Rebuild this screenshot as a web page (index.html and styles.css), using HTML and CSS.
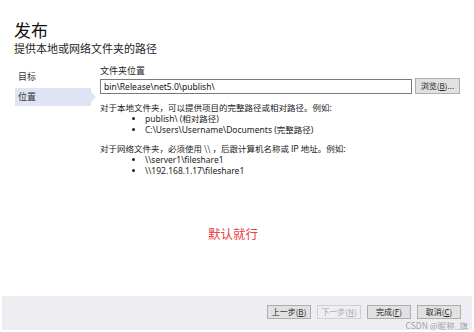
FILE: index.html
```html
<!DOCTYPE html>
<html lang="zh">
<head>
<meta charset="utf-8">
<link rel="stylesheet" href="styles.css">
</head>
<body>
<div class="dialog">
  <header class="head">
    <h1 class="title">发布</h1>
    <p class="subtitle">提供本地或网络文件夹的路径</p>
  </header>
  <main class="main">
    <nav class="nav">
      <div class="nav-item">目标</div>
      <div class="nav-item active">位置</div>
    </nav>
    <section class="content">
      <div class="label">文件夹位置</div>
      <div class="path-row">
        <div class="input">bin\Release\net5.0\publish\</div>
        <button class="btn browse">浏览(<u>B</u>)...</button>
      </div>
      <p class="help">对于本地文件夹，可以提供项目的完整路径或相对路径。例如:</p>
      <ul class="list">
        <li>publish\ (相对路径)</li>
        <li>C:\Users\Username\Documents (完整路径)</li>
      </ul>
      <p class="help gap">对于网络文件夹，必须使用 \\ ，后跟计算机名称或 IP 地址。例如:</p>
      <ul class="list">
        <li>\\server1\fileshare1</li>
        <li>\\192.168.1.17\fileshare1</li>
      </ul>
      <div class="note">默认就行</div>
    </section>
  </main>
  <footer class="foot">
    <button class="btn">上一步(<u>B</u>)</button>
    <button class="btn disabled">下一步(<u>N</u>)</button>
    <button class="btn">完成(<u>F</u>)</button>
    <button class="btn">取消(<u>C</u>)</button>
    <span class="mark">CSDN @昵称_旗</span>
  </footer>
</div>
</body>
</html>
```

FILE: styles.css
```css
* { box-sizing: border-box; }
html, body { margin: 0; padding: 0; background: #fff; }
body {
  font-family: "Noto Sans", "Noto Sans CJK SC", sans-serif;
  color: #1e1e1e;
}
.dialog {
  width: 474px;
  height: 332px;
  display: flex;
  flex-direction: column;
  position: relative;
}
.head { padding: 19px 0 0 14px; }
.title {
  margin: 0;
  font-family: "Noto Sans CJK SC", sans-serif;
  font-weight: 400;
  font-size: 17px;
  line-height: 22px;
  color: #111;
}
.subtitle {
  margin: 0;
  font-family: "Noto Sans CJK SC", sans-serif;
  font-size: 11px;
  line-height: 14px;
  color: #222;
}
.main {
  display: flex;
  margin-top: 9px;
  flex: 1;
}
.nav {
  width: 85px;
  margin-left: 15px;
  padding-top: 4px;
  display: flex;
  flex-direction: column;
  gap: 2px;
}
.nav-item {
  position: relative;
  height: 18px;
  line-height: 18px;
  padding-left: 3px;
  font-family: "Noto Sans CJK SC", sans-serif;
  font-size: 9px;
  color: #333;
  width: 76px;
}
.nav-item.active { background: #dfe4f4; }
.nav-item.active::after {
  content: "";
  position: absolute;
  right: -5px;
  top: 4px;
  border-left: 5px solid #dfe4f4;
  border-top: 5px solid transparent;
  border-bottom: 5px solid transparent;
}
.content { flex: 1; padding-right: 14px; }
.label {
  font-family: "Noto Sans CJK SC", sans-serif;
  font-size: 9px;
  line-height: 13px;
  color: #222;
}
.path-row {
  display: flex;
  align-items: center;
  gap: 3px;
  margin-top: 1px;
}
.input {
  width: 312px;
  height: 15px;
  border: 1px solid #7a7a7a;
  font-size: 8.5px;
  line-height: 13px;
  padding-left: 3px;
  color: #111;
}
.btn {
  font-family: "Noto Sans CJK SC", sans-serif;
  font-size: 8px;
  height: 14px;
  width: 44px;
  padding: 0;
  line-height: 12px;
  background: #e1e1e1;
  border: 1px solid #adadad;
  color: #222;
}
.btn u { text-decoration: underline; }
.browse { height: 16px; width: 45px; line-height: 14px; }
.help {
  margin: 7px 0 0 0;
  font-family: "Noto Sans CJK SC", sans-serif;
  font-size: 8.5px;
  line-height: 12px;
  color: #222;
}
.help.gap { margin-top: 7px; }
.list {
  margin: 0;
  padding-left: 45px;
  font-size: 8.5px;
  line-height: 11px;
  color: #222;
}
.list li { padding-left: 0; }
.note {
  margin: 50px 0 0 108px;
  font-family: "Noto Sans CJK SC", sans-serif;
  font-size: 12.5px;
  line-height: 16px;
  color: #e8403c;
}
.foot {
  margin: 0 2px 2px 2px;
  height: 34px;
  background: #eeeef2;
  display: flex;
  justify-content: flex-end;
  align-items: center;
  gap: 6px;
  padding-right: 11px;
  padding-bottom: 2px;
  position: relative;
}
.btn.disabled { color: #a8a8a8; border-color: #d0d0d0; background: #eeeef2; }
.mark {
  position: absolute;
  right: 4px;
  bottom: 0;
  font-family: "Noto Sans CJK SC", sans-serif;
  font-size: 8.5px;
  line-height: 9px;
  color: rgba(120,120,130,0.7);
}
```
